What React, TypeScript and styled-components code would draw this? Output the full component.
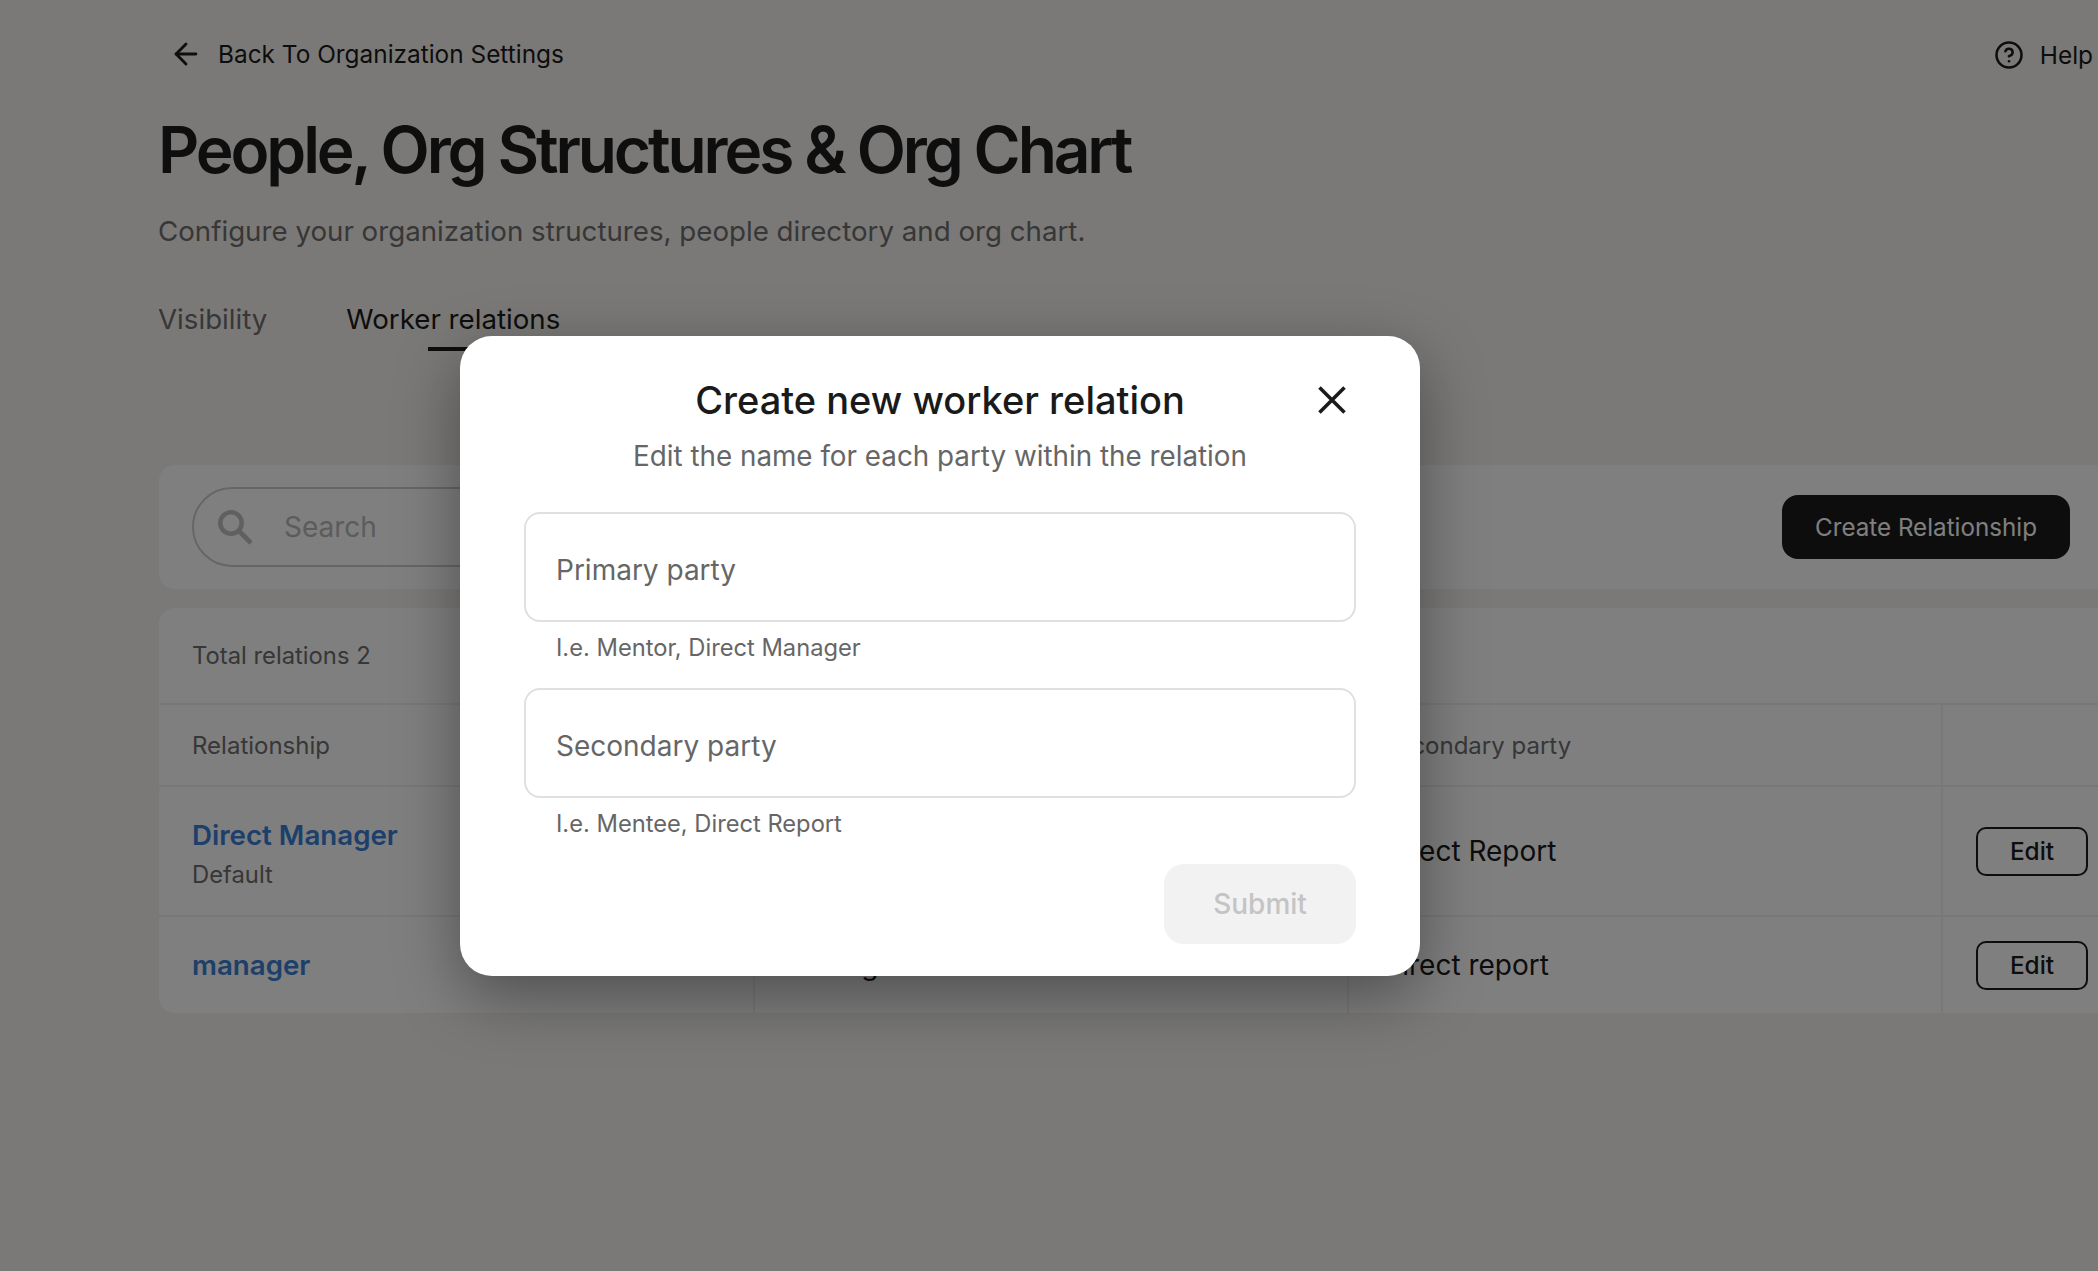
import React from "react";
import styled, { createGlobalStyle } from "styled-components";
import { ArrowLeft, CircleHelp } from "lucide-react";

const Global = createGlobalStyle`
  html, body { margin: 0; padding: 0; }
  body { font-family: Inter, "Liberation Sans", sans-serif; color: #1a1a1a; }
  * { box-sizing: border-box; }
`;

const Viewport = styled.div`
  position: relative;
  width: 2098px;
  height: 1271px;
  overflow: hidden;
  background: #f5f3ef;
`;

const Main = styled.main`
  padding: 30px 0 0 158px;
`;

const TopBar = styled.div`
  display: flex;
  justify-content: space-between;
  align-items: center;
  height: 47px;
  padding: 0 5px 0 11px;
`;

const BackLink = styled.a`
  display: flex;
  align-items: center;
  gap: 15px;
  font-size: 24.4px;
  color: #1a1a1a;
`;

const HelpLink = styled.a`
  display: flex;
  align-items: center;
  gap: 16px;
  font-size: 24.4px;
  color: #1a1a1a;
  padding-top: 3px;
`;

const Title = styled.h1`
  margin: 34px 0 0;
  font-size: 64px;
  line-height: 78px;
  font-weight: 600;
  letter-spacing: -0.0485em;
  color: #1c1c1c;
`;

const Subtitle = styled.p`
  margin: 22px 0 0;
  font-size: 27.7px;
  line-height: 40px;
  color: #6e6e6e;
`;

const Tabs = styled.div`
  display: flex;
  gap: 79px;
  margin-top: 48px;
`;

const Tab = styled.div<{ $active?: boolean }>`
  position: relative;
  font-size: 27.7px;
  line-height: 40px;
  color: ${(p) => (p.$active ? "#1a1a1a" : "#6e6e6e")};
  ${(p) =>
    p.$active &&
    `&::after {
      content: "";
      position: absolute;
      left: 82px;
      width: 48px;
      bottom: -12px;
      height: 4px;
      background: #1a1a1a;
    }`}
`;

const Toolbar = styled.section`
  display: flex;
  justify-content: space-between;
  align-items: center;
  height: 124px;
  margin: 126px 0 0 1px;
  padding: 0 28px 0 33px;
  background: #fff;
  border-radius: 16px 0 0 16px;
`;

const SearchBox = styled.div`
  display: flex;
  align-items: center;
  gap: 31px;
  width: 800px;
  height: 80px;
  padding-left: 24px;
  border: 2px solid #ccc;
  border-radius: 40px;
  font-size: 28px;
  color: #b8b8b8;
`;

const PrimaryButton = styled.button`
  width: 288px;
  height: 64px;
  border: 0;
  border-radius: 16px;
  background: #1a1a1a;
  color: #fff;
  font: 400 24.2px Inter, sans-serif;
`;

const TableCard = styled.section`
  margin: 19px 0 0 1px;
  background: #fff;
  border-radius: 16px 0 0 16px;
  width: 1939px;
`;

const TotalRow = styled.div`
  height: 97px;
  display: flex;
  align-items: center;
  padding-left: 33px;
  font-size: 23.8px;
  color: #6e6e6e;
  border-bottom: 2px solid #f0f0f0;
`;

const Row = styled.div<{ $height: number }>`
  display: grid;
  grid-template-columns: 594px 594px 594px 1fr;
  height: ${(p) => p.$height}px;
  & + & { border-top: 2px solid #f0f0f0; }
`;

const Cell = styled.div`
  display: flex;
  flex-direction: column;
  justify-content: center;
  padding-left: 33px;
  & + & { border-left: 2px solid #f0f0f0; }
`;

const NameCell = styled(Cell)`
  padding-top: 8px;
`;

const HeaderText = styled.span`
  font-size: 24px;
  color: #6e6e6e;
`;

const NameLink = styled.a`
  font-size: 27.7px;
  line-height: 36px;
  font-weight: 600;
  color: #3b80d4;
`;

const Muted = styled.span`
  margin-top: 4px;
  font-size: 23.8px;
  line-height: 36px;
  color: #6e6e6e;
`;

const CellText = styled.span`
  font-size: 28px;
  color: #1a1a1a;
`;

const EditButton = styled.button`
  width: 112px;
  height: 49px;
  border: 2px solid #1a1a1a;
  border-radius: 10px;
  background: transparent;
  color: #1a1a1a;
  font: 500 24.4px Inter, sans-serif;
`;

const Overlay = styled.div`
  position: absolute;
  inset: 0;
  background: rgba(0, 0, 0, 0.5);
  padding: 336px 0 0 460px;
`;

const Modal = styled.div`
  width: 960px;
  height: 640px;
  padding: 40px 64px 0;
  background: #fff;
  border-radius: 32px;
  box-shadow: 0 20px 64px rgba(0, 0, 0, 0.38);
`;

const ModalHeader = styled.header`
  display: grid;
  grid-template-columns: 1fr auto 1fr;
  align-items: center;
  height: 48px;
`;

const ModalTitle = styled.h2`
  margin: 0;
  font-size: 38px;
  line-height: 48px;
  font-weight: 500;
  color: #1a1a1a;
`;

const CloseButton = styled.button`
  justify-self: end;
  display: flex;
  margin-right: 10px;
  padding: 0;
  border: 0;
  background: none;
`;

const ModalSub = styled.p`
  margin: 12px 0 0;
  font-size: 27.8px;
  line-height: 40px;
  text-align: center;
  color: #666;
`;

const Field = styled.div<{ $top: number }>`
  margin-top: ${(p) => p.$top}px;
  height: 110px;
  padding: 6px 30px 0;
  display: flex;
  align-items: center;
  border: 2px solid #e0e0e0;
  border-radius: 16px;
  font-size: 28px;
  color: #666;
`;

const Hint = styled.p`
  margin: 9px 0 0 32px;
  font-size: 23.7px;
  line-height: 34px;
  color: #666;
`;

const Actions = styled.div`
  display: flex;
  justify-content: flex-end;
  margin-top: 23px;
`;

const Submit = styled.button`
  width: 192px;
  height: 80px;
  border: 0;
  border-radius: 20px;
  background: #f2f2f2;
  color: #c4c4c4;
  font: 500 28px Inter, sans-serif;
`;

export default function App() {
  return (
    <Viewport>
      <Global />
      <Main>
        <TopBar>
          <BackLink>
            <ArrowLeft size={34} strokeWidth={2} />
            Back To Organization Settings
          </BackLink>
          <HelpLink>
            <CircleHelp size={30} strokeWidth={2} />
            Help
          </HelpLink>
        </TopBar>
        <Title>People, Org Structures &amp; Org Chart</Title>
        <Subtitle>Configure your organization structures, people directory and org chart.</Subtitle>
        <Tabs>
          <Tab>Visibility</Tab>
          <Tab $active>Worker relations</Tab>
        </Tabs>
        <Toolbar>
          <SearchBox>
            <svg width="35" height="35" viewBox="0 0 35 35" fill="none" stroke="#c0c0c0">
              <circle cx="13" cy="13" r="10.7" strokeWidth="4.5" />
              <path d="M20.5 20.5 33 33" strokeWidth="4.8" />
            </svg>
            Search
          </SearchBox>
          <PrimaryButton>Create Relationship</PrimaryButton>
        </Toolbar>
        <TableCard>
          <TotalRow>Total relations 2</TotalRow>
          <Row $height={80}>
            <Cell><HeaderText>Relationship</HeaderText></Cell>
            <Cell><HeaderText>Primary party</HeaderText></Cell>
            <Cell><HeaderText>Secondary party</HeaderText></Cell>
            <Cell />
          </Row>
          <Row $height={130}>
            <NameCell>
              <NameLink>Direct Manager</NameLink>
              <Muted>Default</Muted>
            </NameCell>
            <Cell><CellText>Direct Manager</CellText></Cell>
            <Cell><CellText>Direct Report</CellText></Cell>
            <Cell><EditButton>Edit</EditButton></Cell>
          </Row>
          <Row $height={98}>
            <Cell><NameLink>manager</NameLink></Cell>
            <Cell><CellText>Manager</CellText></Cell>
            <Cell><CellText>Direct report</CellText></Cell>
            <Cell><EditButton>Edit</EditButton></Cell>
          </Row>
        </TableCard>
      </Main>
      <Overlay>
        <Modal>
          <ModalHeader>
            <span />
            <ModalTitle>Create new worker relation</ModalTitle>
            <CloseButton aria-label="Close">
              <svg width="28" height="28" viewBox="0 0 28 28" fill="none" stroke="#1a1a1a" strokeWidth="3.6">
                <path d="M1.5 1.5 26.5 26.5M26.5 1.5 1.5 26.5" />
              </svg>
            </CloseButton>
          </ModalHeader>
          <ModalSub>Edit the name for each party within the relation</ModalSub>
          <Field $top={36}>Primary party</Field>
          <Hint>I.e. Mentor, Direct Manager</Hint>
          <Field $top={23}>Secondary party</Field>
          <Hint>I.e. Mentee, Direct Report</Hint>
          <Actions>
            <Submit>Submit</Submit>
          </Actions>
        </Modal>
      </Overlay>
    </Viewport>
  );
}
